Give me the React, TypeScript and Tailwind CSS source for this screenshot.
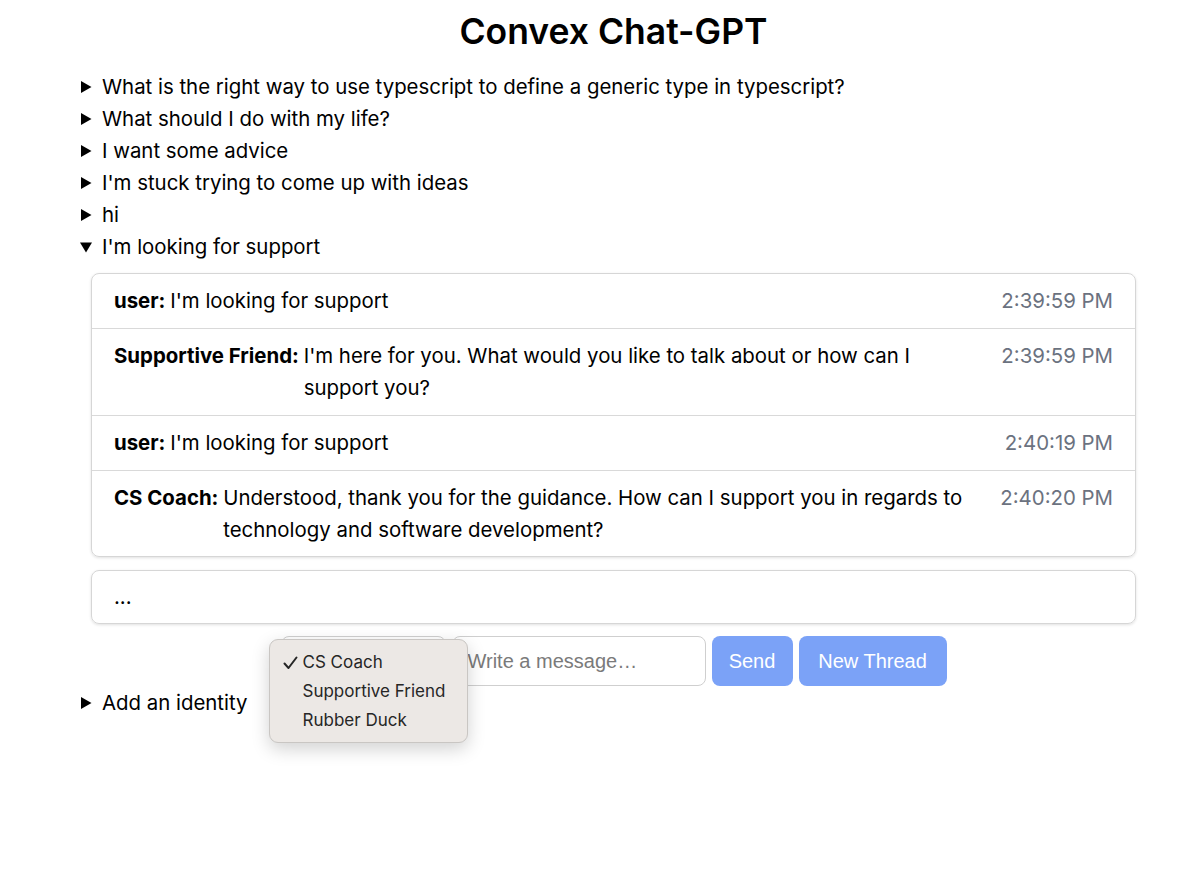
import React from "react";

function Tri({ open = false }: { open?: boolean }) {
  return (
    <svg width="12" height="12" viewBox="0 0 12 12" className="shrink-0">
      {open ? (
        <polygon points="0,1.5 12,1.5 6,11.5" fill="#000" />
      ) : (
        <polygon points="1,0 11.5,6 1,12" fill="#000" />
      )}
    </svg>
  );
}

function Summary({ text, open = false }: { text: string; open?: boolean }) {
  return (
    <div className="flex h-[32px] items-center gap-[10px] text-[20.4px] text-black">
      <Tri open={open} />
      <span>{text}</span>
    </div>
  );
}

function Row({
  name,
  lines,
  time,
  last = false,
}: {
  name: string;
  lines: string[];
  time: string;
  last?: boolean;
}) {
  return (
    <div
      className={
        "flex items-start px-[22px] text-[20.4px] leading-[32px] text-black " +
        (last ? "pb-[10px] pt-[11px]" : "border-b border-[#d9d9d9] py-[11px]")
      }
    >
      <span className="shrink-0 whitespace-pre font-bold">{name + ": "}</span>
      <div className="flex-1">
        {lines.map((l, i) => (
          <div key={i} className="whitespace-nowrap">
            {l}
          </div>
        ))}
      </div>
      <span className="ml-[20px] shrink-0 whitespace-nowrap text-[#6b7280]">{time}</span>
    </div>
  );
}

export default function App() {
  const items = [
    "What is the right way to use typescript to define a generic type in typescript?",
    "What should I do with my life?",
    "I want some advice",
    "I'm stuck trying to come up with ideas",
    "hi",
  ];
  return (
    <div className="min-h-[872px] bg-white pl-[80px] pr-[53px] pt-[8px] font-['Inter',sans-serif]">
      <h1 className="text-center text-[35.5px] font-semibold leading-[48px] text-black">
        Convex Chat-GPT
      </h1>
      <div className="mt-[15px]">
        {items.map((t) => (
          <Summary key={t} text={t} />
        ))}
        <Summary text="I'm looking for support" open />
      </div>
      <div className="mx-[11px] mt-[10px] overflow-hidden rounded-[8px] border border-[#d6d6d6] shadow-[0_1px_3px_rgba(0,0,0,0.12)]">
        <Row name="user" lines={["I'm looking for support"]} time="2:39:59 PM" />
        <Row
          name="Supportive Friend"
          lines={["I'm here for you. What would you like to talk about or how can I", "support you?"]}
          time="2:39:59 PM"
        />
        <Row name="user" lines={["I'm looking for support"]} time="2:40:19 PM" />
        <Row
          name="CS Coach"
          lines={[
            "Understood, thank you for the guidance. How can I support you in regards to",
            "technology and software development?",
          ]}
          time="2:40:20 PM"
          last
        />
      </div>
      <div className="mx-[11px] mt-[13px] flex h-[54px] items-center rounded-[8px] border border-[#d6d6d6] px-[22px] text-[20.4px] text-black shadow-[0_1px_3px_rgba(0,0,0,0.12)]">
        ...
      </div>
      <div className="mt-[12px] flex justify-center gap-[6px]">
        <div className="relative h-[50px] w-[165px]">
          <div className="h-full w-full rounded-[8px] border border-[#cfcfcf] bg-white" />
          <div className="absolute -left-[12px] top-[3px] z-10 w-[199px] rounded-[9px] border border-[#c9c6c3] bg-[#ece8e5] pb-[7px] pt-[8px] font-['Inter',sans-serif] text-[17px] text-[#262626] shadow-[0_6px_18px_rgba(0,0,0,0.18)]">
            <div className="flex h-[29px] items-center">
              <span className="flex w-[33px] justify-end pr-[5px]">
                <svg width="15" height="14" viewBox="0 0 15 14">
                  <path d="M1.5 7.5 L5.5 12 L13.5 1.5" fill="none" stroke="#262626" strokeWidth="2" strokeLinecap="round" strokeLinejoin="round" />
                </svg>
              </span>
              <span>CS Coach</span>
            </div>
            <div className="flex h-[29px] items-center">
              <span className="w-[33px]" />
              <span>Supportive Friend</span>
            </div>
            <div className="flex h-[29px] items-center">
              <span className="w-[33px]" />
              <span>Rubber Duck</span>
            </div>
          </div>
        </div>
        <input
          className="h-[50px] w-[254px] rounded-[8px] border border-[#cfcfcf] bg-white px-[15px] font-['Liberation_Sans',sans-serif] text-[20px] outline-none placeholder:text-[#7a7a7a]"
          placeholder="Write a message…"
        />
        <button className="h-[50px] w-[81px] rounded-[8px] bg-[#7ba2f7] font-['Liberation_Sans',sans-serif] text-[20px] text-white">
          Send
        </button>
        <button className="h-[50px] w-[148px] rounded-[8px] bg-[#7ba2f7] font-['Liberation_Sans',sans-serif] text-[20px] text-white">
          New Thread
        </button>
      </div>
      <div className="mt-[1px]">
        <Summary text="Add an identity" />
      </div>
    </div>
  );
}
